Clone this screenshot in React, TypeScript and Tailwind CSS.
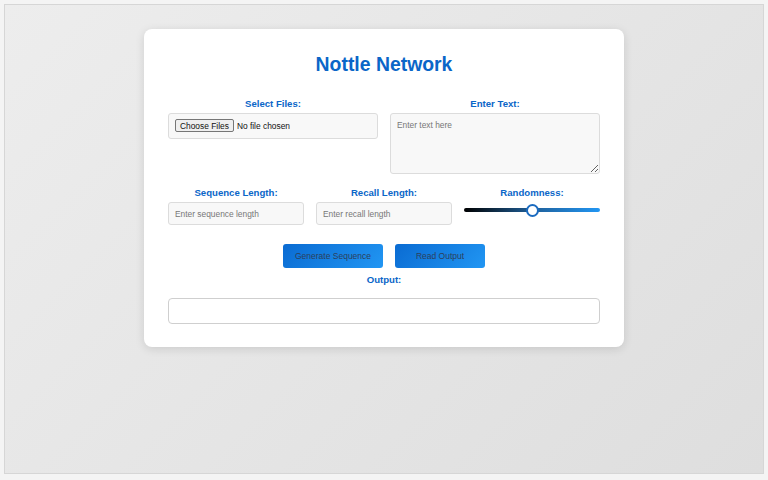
import { useState } from 'react'

const label = "block text-center text-[9.6px] font-bold leading-[12px] text-[#0a66c8] mb-[3px]"
const field =
  "block w-full h-[23px] px-[6px] text-[8.4px] text-[#333] bg-[#f8f8f8] border border-[#dcdcdc] rounded-[3px] outline-none placeholder:text-[#777]"

export default function App() {
  const [rand, setRand] = useState(50)

  return (
    <div className="h-[480px] bg-[#f4f4f4] pt-1 px-1" style={{ fontFamily: "'Liberation Sans', Arial, sans-serif" }}>
      <div className="h-[470px] border border-[#d6d6d6] bg-[linear-gradient(135deg,#ededed,#dedede)] pt-[24px]">
        <div className="mx-auto w-[480px] bg-white rounded-[8px] shadow-[0_2px_10px_rgba(0,0,0,0.12)] px-[24px] pt-[24px] pb-[23px]">
          <h1 className="text-center text-[19.4px] font-bold leading-[22px] text-[#0a66c8]">Nottle Network</h1>

          {/* files + text */}
          <div className="grid grid-cols-2 gap-x-[12px] mt-[23px]">
            <div>
              <span className={label}>Select Files:</span>
              <div className="h-[26px] flex items-center px-[6px] bg-[#f8f8f8] border border-[#dcdcdc] rounded-[3px]">
                <input
                  type="file"
                  multiple
                  className="block text-[8.4px] text-[#111] file:mr-[3px] file:h-[13px] file:px-[4px] file:border file:border-[#767676] file:rounded-[2px] file:bg-[#efefef] file:text-[#111]"
                />
              </div>
            </div>
            <div>
              <span className={label}>Enter Text:</span>
              <textarea
                placeholder="Enter text here"
                className="block w-full h-[61px] px-[6px] py-[5px] text-[8.4px] text-[#333] bg-[#f8f8f8] border border-[#dcdcdc] rounded-[3px] outline-none placeholder:text-[#777]"
              />
            </div>
          </div>

          {/* lengths + randomness */}
          <div className="grid grid-cols-3 gap-x-[12px] mt-[13px]">
            <div>
              <span className={label}>Sequence Length:</span>
              <input type="number" placeholder="Enter sequence length" className={field} />
            </div>
            <div>
              <span className={label}>Recall Length:</span>
              <input type="number" placeholder="Enter recall length" className={field} />
            </div>
            <div>
              <span className={label}>Randomness:</span>
              <input
                type="range"
                min={0}
                max={100}
                value={rand}
                onChange={e => setRand(Number(e.target.value))}
                className="block w-full h-[4px] mt-[9px] appearance-none rounded-full bg-[linear-gradient(90deg,#000000,#1f5f99_50%,#2196f3)] outline-none [&::-webkit-slider-thumb]:appearance-none [&::-webkit-slider-thumb]:w-[13px] [&::-webkit-slider-thumb]:h-[13px] [&::-webkit-slider-thumb]:rounded-full [&::-webkit-slider-thumb]:bg-white [&::-webkit-slider-thumb]:border-2 [&::-webkit-slider-thumb]:border-[#1b6bc0]"
              />
            </div>
          </div>

          {/* actions */}
          <div className="flex justify-center gap-[12px] mt-[19px]">
            <button className="w-[100px] h-[24px] rounded-[3px] bg-[linear-gradient(135deg,#0a6bd2,#2196f3)] text-[8.5px] text-[#2b3f5c]">
              Generate Sequence
            </button>
            <button className="w-[90px] h-[24px] rounded-[3px] bg-[linear-gradient(135deg,#0a6bd2,#2196f3)] text-[8.5px] text-[#2b3f5c]">
              Read Output
            </button>
          </div>

          <span className={label + " mt-[6px] !mb-[12px]"}>Output:</span>
          <div className="h-[26px] bg-white border border-[#cfcfcf] rounded-[4px]" />
        </div>
      </div>
    </div>
  )
}
